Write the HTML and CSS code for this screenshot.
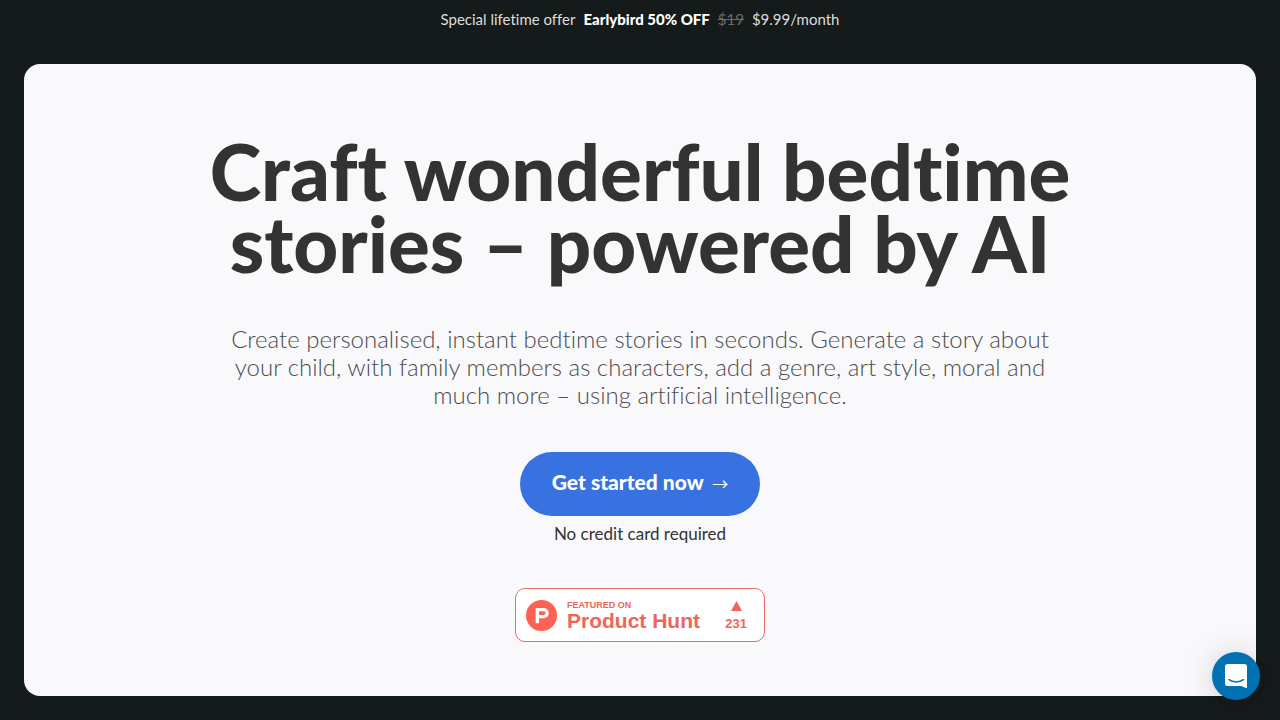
FILE: index.html
```html
<!DOCTYPE html>
<html lang="en">
<head>
  <meta charset="UTF-8">
  <meta name="viewport" content="width=device-width, initial-scale=1">
  <title>Craft wonderful bedtime stories</title>
  <link rel="stylesheet" href="styles.css">
</head>
<body>
  <header class="offer">
    <span>Special lifetime offer</span>
    <strong>Earlybird 50% OFF</strong>
    <s>$19</s>
    <span>$9.99/month</span>
  </header>

  <main class="hero">
    <h1>Craft wonderful bedtime stories – powered by AI</h1>
    <p class="intro">Create personalised, instant bedtime stories in seconds. Generate a story about your child, with family members as characters, add a genre, art style, moral and much more – using artificial intelligence.</p>
    <a class="cta" href="#start">Get started now <span class="arrow">→</span></a>
    <p class="note">No credit card required</p>

    <!-- Product Hunt badge -->
    <a class="badge" href="#producthunt">
      <svg class="badge-logo" viewBox="0 0 31 31" aria-hidden="true">
        <circle cx="15.5" cy="15.5" r="15.5" fill="#ff6154"/>
        <path fill="#fff" fill-rule="evenodd" d="M9.700 8h8a5 5 0 0 1 0 10.200h-4.700v5.100H9.700zM13 11.200v3.800h4.700a1.900 1.900 0 0 0 0-3.800z"/>
      </svg>
      <span class="badge-text">
        <span class="badge-label">FEATURED ON</span>
        <span class="badge-name">Product Hunt</span>
      </span>
      <span class="badge-votes">
        <svg class="badge-up" viewBox="0 0 11 10" aria-hidden="true"><path fill="#f0655a" d="M5.500 0 11 10H0z"/></svg>
        <span>231</span>
      </span>
    </a>
  </main>

  <!-- chat launcher -->
  <button class="chat" type="button" aria-label="Open chat">
    <svg viewBox="0 0 22 24" aria-hidden="true">
      <path fill="#fff" d="M2.500 0h17A2.500 2.500 0 0 1 22 2.500V24c-2-.4-4-1.200-5.500-2h-14A2.500 2.500 0 0 1 0 19.500v-17A2.500 2.500 0 0 1 2.500 0z"/>
      <path fill="none" stroke="#0071b2" stroke-width="1.500" stroke-linecap="round" d="M4 15.700c4 3 10.500 3 14.400 0"/>
    </svg>
  </button>
</body>
</html>
```
FILE: styles.css
```css
*{box-sizing: border-box;}
body,h1,p{margin:0;}
a{text-decoration: none;}

body{
  min-height: 100vh;
  display: flex;
  flex-direction: column;
  background-color: #151a1a;
  color: #333;
  font-family: Avenir, "Avenir Next", Lato, sans-serif;
  font-variant-ligatures: none;
}

.offer{
  display: flex;
  justify-content: center;
  gap: 8px;
  padding: 9px 24px 11px;
  line-height: 20px;
  font-size: 15px;
  color: #dcdede;
}
.offer strong{
  font-weight: 900;
  color: #fff;
}
.offer s{
  color: #686c6c;
}

.hero{
  flex: 1;
  display: flex;
  flex-direction: column;
  align-items: center;
  margin: 24px;
  padding: 71px 24px 54px;
  border-radius: 16px;
  background-color: #f9f9fc;
  text-align: center;
}
.hero h1{
  max-width: 900px;
  font-size: 78px;
  line-height: 72px;
  font-weight: 900;
}
.intro{
  max-width: 832px;
  margin-top: 46px;
  font-size: 24px;
  line-height: 28px;
  font-weight: 300;
  color: #4c4c4c;
}
.cta{
  margin-top: 43px;
  padding: 0 32px 4px;
  border-radius: 32px;
  background-color: #3871e0;
  color: #fff;
  font-size: 21px;
  line-height: 60px;
  font-weight: 900;
}
.cta .arrow{
  margin-left: 4px;
  font-family: "Noto Sans CJK JP", sans-serif;
  font-size: 16px;
  font-weight: 400;
  line-height: 20px;
}
.note{
  margin-top: 6px;
  font-size: 17px;
  line-height: 24px;
}

.badge{
  display: flex;
  align-items: center;
  width: 250px;
  height: 54px;
  margin-top: 42px;
  padding: 1px 17px 0 10px;
  border: 1px solid #ea6b61;
  border-radius: 10px;
  background-color: #fff;
  color: #f0655a;
  font-family: Helvetica, "Liberation Sans", sans-serif;
  font-weight: bold;
  text-align: left;
}
.badge-logo{
  width: 31px;
  height: 31px;
}
.badge-text{
  display: flex;
  flex-direction: column;
  margin-left: 10px;
}
.badge-label{
  font-size: 9px;
  line-height: 10px;
}
.badge-name{
  font-size: 21px;
  line-height: 22px;
}
.badge-votes{
  display: flex;
  flex-direction: column;
  align-items: center;
  gap: 5px;
  margin-left: auto;
  padding-top: 1px;
  font-size: 13px;
  line-height: 16px;
}
.badge-up{
  width: 11px;
  height: 10px;
}

.chat{
  position: fixed;
  right: 20px;
  bottom: 20px;
  display: flex;
  align-items: center;
  justify-content: center;
  width: 48px;
  height: 48px;
  padding: 0;
  border: none;
  border-radius: 50%;
  background-color: #0071b2;
  box-shadow: 0 1px 6px rgba(0,0,0,.06), 0 2px 32px rgba(0,0,0,.16);
  cursor: pointer;
}
.chat svg{
  width: 22px;
  height: 24px;
}
```
